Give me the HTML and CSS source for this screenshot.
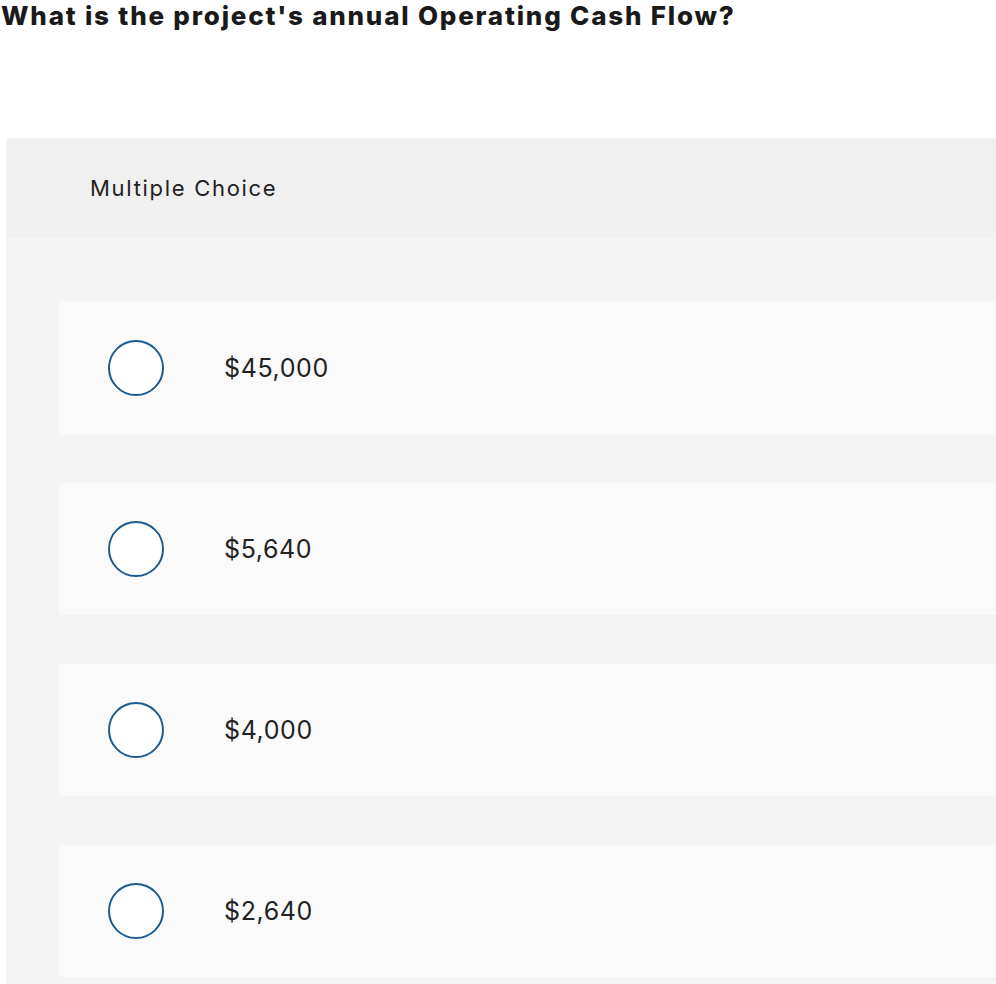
FILE: index.html
```html
<!DOCTYPE html>
<html>
<head>
<meta charset="utf-8">
<link rel="stylesheet" href="styles.css">
</head>
<body>
<h1 class="question">What is the project's annual Operating Cash Flow?</h1>
<section class="panel">
  <div class="panel-header">Multiple Choice</div>
  <div class="panel-body">
    <div class="option"><span class="radio"></span><span class="label">$45,000</span></div>
    <div class="option"><span class="radio"></span><span class="label">$5,640</span></div>
    <div class="option"><span class="radio"></span><span class="label">$4,000</span></div>
    <div class="option"><span class="radio"></span><span class="label">$2,640</span></div>
  </div>
</section>
</body>
</html>
```
FILE: styles.css
```css
html, body {
  margin: 0;
  padding: 0;
  background: #ffffff;
  overflow: hidden;
}
body {
  font-family: "Inter", "Liberation Sans", sans-serif;
  color: #222222;
}
.question {
  margin: 0;
  padding: 0 0 0 1px;
  font-size: 26px;
  line-height: 32px;
  font-weight: 800;
  letter-spacing: 1.8px;
  color: #1a1a1a;
  white-space: nowrap;
}
.panel {
  margin: 106px 0 0 6px;
  border-radius: 5px 0 0 0;
  overflow: hidden;
}
.panel-header {
  background: #f0f0f0;
  height: 100px;
  display: flex;
  align-items: center;
  padding-left: 84px;
  font-size: 22px;
  letter-spacing: 1.7px;
  color: #222222;
}
.panel-body {
  background: #f4f4f4;
  padding: 64px 0 40px 52px;
  display: flex;
  flex-direction: column;
  gap: 49px;
}
.option {
  background: #fafafa;
  height: 132px;
  border-radius: 5px 0 0 5px;
  display: flex;
  align-items: center;
}
.radio {
  box-sizing: border-box;
  width: 56px;
  height: 56px;
  border: 2px solid #1f5b8f;
  border-radius: 50%;
  background: #ffffff;
  margin-left: 50px;
  flex: none;
}
.label {
  margin-left: 60px;
  font-size: 25px;
  letter-spacing: 0.6px;
  color: #222222;
}
```
